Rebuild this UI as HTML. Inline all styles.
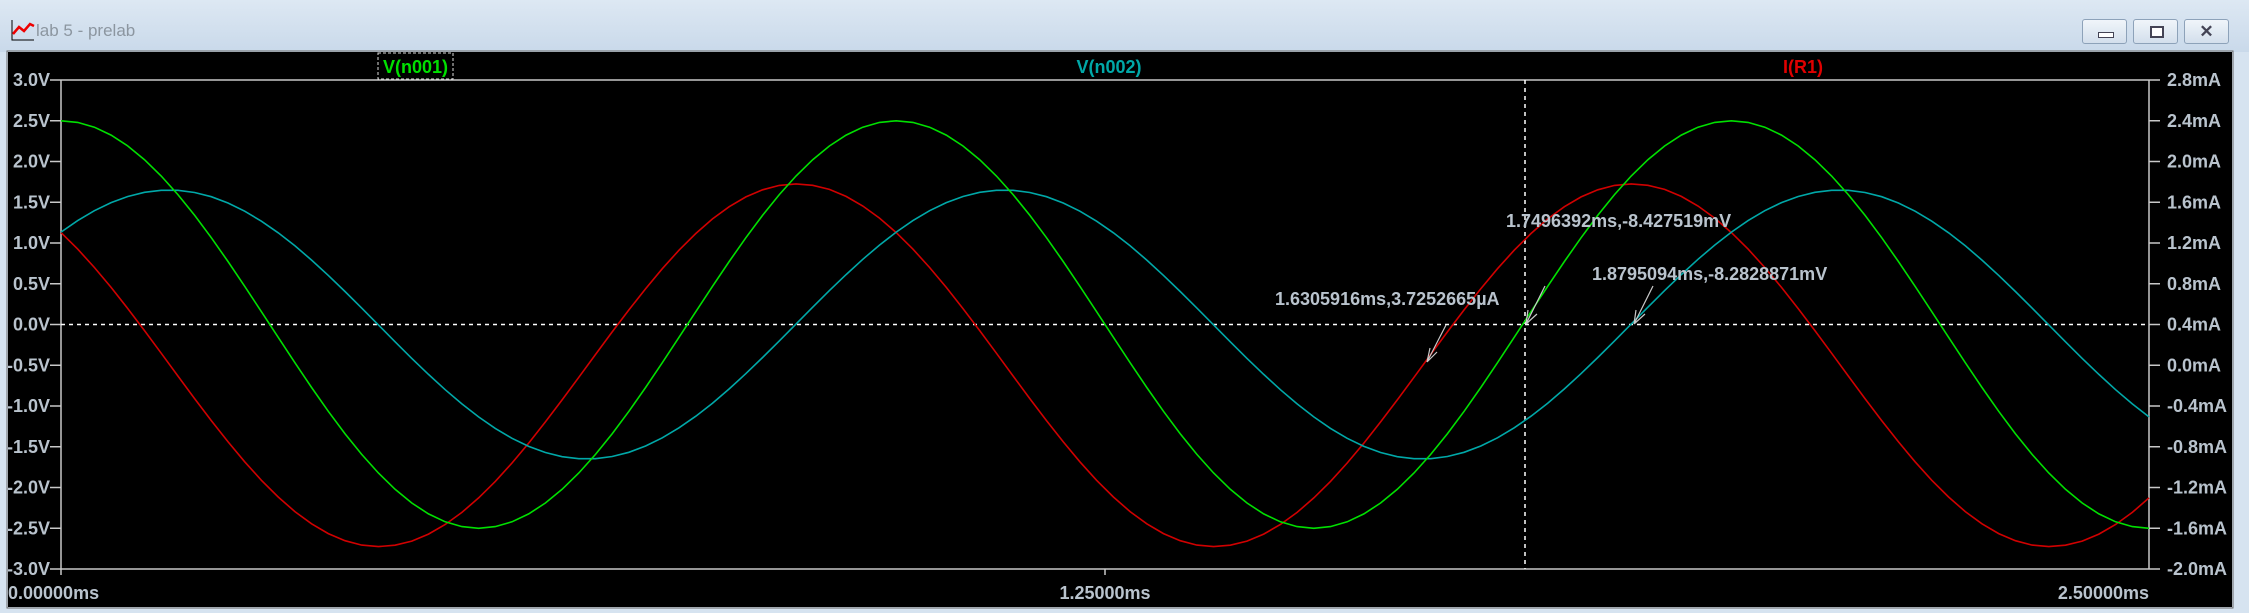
<!DOCTYPE html>
<html><head><meta charset="utf-8"><style>
body{margin:0;width:2249px;height:613px;overflow:hidden;background:#d6e3f0;font-family:"Liberation Sans",sans-serif}
#tb{position:absolute;left:0;top:0;width:2249px;height:52px;background:linear-gradient(#dde8f3,#c9d9ea)}
#title{position:absolute;left:36px;top:21px;font-size:17px;color:#8c96a0}
.btn{position:absolute;top:19px;width:45px;height:25px;border:1px solid #8da2b9;border-radius:3px;background:linear-gradient(#f0f5fa,#d3dfec);box-sizing:border-box}
svg{position:absolute;left:0;top:0}
</style></head><body>
<div id="tb"></div>
<svg width="26" height="26" style="left:10px;top:18px"><path d="M2 2V22H24" stroke="#000" fill="none"/><path d="M3 16L9 9L14 13L20 6L24 8" stroke="#e00" stroke-width="2.5" fill="none"/></svg>
<div id="title">lab 5 - prelab</div>
<div class="btn" style="left:2082px"><div style="position:absolute;left:15px;top:12px;width:14px;height:4px;border:1px solid #445;background:#fff"></div></div>
<div class="btn" style="left:2133px"><div style="position:absolute;left:16px;top:6px;width:10px;height:8px;border:2px solid #445;background:#fff"></div></div>
<div class="btn" style="left:2184px;font-weight:bold;color:#445;text-align:center;font-size:17px;line-height:23px">✕</div>
<svg width="2249" height="613">
<rect x="8" y="52" width="2224" height="555" fill="#000"/>
<rect x="7" y="51" width="2226" height="557" fill="none" stroke="#6a6a6a"/>
<g id="g" stroke="#c8c8c8" stroke-width="1.5" fill="none">
<path d="M61 80H2149M61 569H2149M61 80V575M2149 80V569"/>
</g>
<g id="ticks" stroke="#c8c8c8" stroke-width="1.5"></g>
<g id="lbl" font-family="Liberation Sans" font-weight="bold" font-size="18" fill="#b9c3cd"></g>
<path d="M61 324.5H2149M1525 80V569" stroke="#fff" stroke-width="1.5" stroke-dasharray="4,4" fill="none"/>
<polyline id="red" fill="none" stroke="#d00000" stroke-width="1.6"/>
<polyline id="cy" fill="none" stroke="#00a8a8" stroke-width="1.6"/>
<polyline id="gr" fill="none" stroke="#00e000" stroke-width="1.6"/>
<g stroke="#c8c8c8" stroke-width="1.2" fill="none">
<path d="M1446 325L1427 362M1427 362L1430 348M1427 362L1437 352"/>
<path d="M1545 286L1526 324M1526 324L1528 310M1526 324L1537 314"/>
<path d="M1653 286L1634 324M1634 324L1636 310M1634 324L1645 314"/>
</g>
<g font-family="Liberation Sans" font-weight="bold" font-size="18" fill="#b9c3cd">
<text x="1275" y="305">1.6305916ms,3.7252665µA</text>
<text x="1506" y="227">1.7496392ms,-8.427519mV</text>
<text x="1592" y="280">1.8795094ms,-8.2828871mV</text>
<text x="8" y="599">0.00000ms</text>
<text x="1105" y="599" text-anchor="middle">1.25000ms</text>
<text x="2149" y="599" text-anchor="end">2.50000ms</text>
</g>
<rect x="378" y="53" width="75" height="26" fill="none" stroke="#ddd" stroke-dasharray="3,2"/>
<g font-family="Liberation Sans" font-weight="bold" font-size="18">
<text x="415.5" y="73" text-anchor="middle" fill="#00e000">V(n001)</text>
<text x="1109" y="73" text-anchor="middle" fill="#00a8a8">V(n002)</text>
<text x="1803" y="73" text-anchor="middle" fill="#e00000">I(R1)</text>
</g>
</svg>
<script>
var ns="http://www.w3.org/2000/svg",st=40.75;
var tk=document.getElementById("ticks"),lb=document.getElementById("lbl");
function el(n,a,p,t){var e=document.createElementNS(ns,n);for(var k in a)e.setAttribute(k,a[k]);if(t)e.textContent=t;p.appendChild(e);}
function f(v){var s=(Math.round(v*10)/10).toFixed(1);return s=="-0.0"?"0.0":s;}
for(var i=0;i<=12;i++){var y=80+i*st;
el("line",{x1:50,x2:61,y1:y,y2:y},tk);el("line",{x1:2149,x2:2160,y1:y,y2:y},tk);
el("text",{x:50,y:y+6,"text-anchor":"end"},lb,f(3-i*0.5)+"V");
el("text",{x:2167,y:y+6},lb,f(2.8-i*0.4)+"mA");}
el("line",{x1:1105,x2:1105,y1:569,y2:575},tk);
function X(t){return 61+t*835.2}
function VY(v){return 80+(3-v)*st/0.5}
function IY(i){return 80+(2.8-i)*st/0.4}
var r=[],c=[],g=[],P=2*Math.PI;
for(var t=0;t<=2.5001;t+=0.02){
g.push(X(t).toFixed(1)+","+VY(2.5*Math.cos(P*t)).toFixed(1));
c.push(X(t).toFixed(1)+","+VY(1.65*Math.cos(P*(t-0.1295))).toFixed(1));
r.push(X(t).toFixed(1)+","+IY(1.78*Math.sin(P*(t-1.6306))).toFixed(1));}
document.getElementById("gr").setAttribute("points",g.join(" "));
document.getElementById("cy").setAttribute("points",c.join(" "));
document.getElementById("red").setAttribute("points",r.join(" "));
</script>
</body></html>
